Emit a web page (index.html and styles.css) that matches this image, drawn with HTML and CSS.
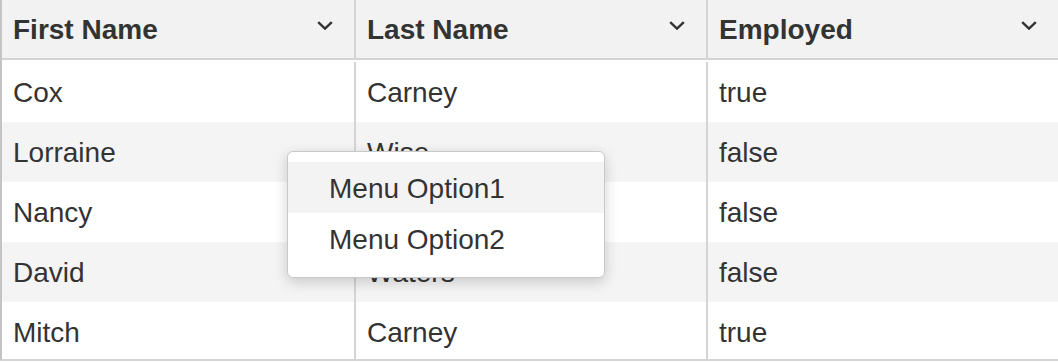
FILE: index.html
```html
<!DOCTYPE html>
<html>
<head>
<meta charset="utf-8">
<link rel="stylesheet" href="styles.css">
</head>
<body>
<div class="grid">
  <div class="head">
    <div class="hcell"><span>First Name</span><svg class="chev" viewBox="0 0 16 9"><path d="M1.2 1.2 L8 7.6 L14.8 1.2" /></svg></div>
    <div class="hcell"><span>Last Name</span><svg class="chev" viewBox="0 0 16 9"><path d="M1.2 1.2 L8 7.6 L14.8 1.2" /></svg></div>
    <div class="hcell last"><span>Employed</span><svg class="chev" viewBox="0 0 16 9"><path d="M1.2 1.2 L8 7.6 L14.8 1.2" /></svg></div>
  </div>
  <div class="body">
    <div class="row"><div class="cell">Cox</div><div class="cell">Carney</div><div class="cell last">true</div></div>
    <div class="row alt"><div class="cell">Lorraine</div><div class="cell">Wise</div><div class="cell last">false</div></div>
    <div class="row"><div class="cell">Nancy</div><div class="cell">Waters</div><div class="cell last">false</div></div>
    <div class="row alt"><div class="cell">David</div><div class="cell">Waters</div><div class="cell last">false</div></div>
    <div class="row"><div class="cell">Mitch</div><div class="cell">Carney</div><div class="cell last">true</div></div>
  </div>
</div>
<div class="menu">
  <div class="item active">Menu Option1</div>
  <div class="item">Menu Option2</div>
</div>
</body>
</html>
```

FILE: styles.css
```css
html, body {
  margin: 0;
  padding: 0;
  background: #ffffff;
}
body {
  font-family: "Liberation Sans", Arial, sans-serif;
  color: #333333;
  font-size: 28px;
  width: 1058px;
  height: 362px;
  overflow: hidden;
  position: relative;
}
.grid {
  box-sizing: border-box;
  height: 361px;
  border-left: 2px solid #c4c4c4;
  border-bottom: 2px solid #d4d4d4;
  overflow: hidden;
}
.head {
  display: grid;
  grid-template-columns: 354px 352px 1fr;
  height: 58px;
  background: #f2f2f2;
  border-bottom: 2px solid #d4d4d4;
}
.hcell {
  display: flex;
  align-items: center;
  justify-content: space-between;
  padding: 1px 21px 0 11px;
  border-right: 2px solid #d4d4d4;
  font-weight: bold;
}
.hcell.last {
  border-right: none;
  padding-right: 21px;
}
.chev {
  width: 16px;
  height: 9px;
  margin-top: -9px;
}
.chev path {
  fill: none;
  stroke: #333333;
  stroke-width: 2.4;
}
.body {
  padding-top: 2px;
}
.row {
  display: grid;
  grid-template-columns: 354px 352px 1fr;
  height: 60px;
}
.row.alt {
  background: #f4f4f4;
}
.cell {
  display: flex;
  align-items: center;
  padding: 2px 0 0 11px;
  border-right: 2px solid #d4d4d4;
}
.cell.last {
  border-right: none;
}
.menu {
  position: absolute;
  left: 287px;
  top: 151px;
  width: 318px;
  height: 127px;
  box-sizing: border-box;
  background: #ffffff;
  border: 1px solid #c9c9c9;
  border-radius: 6px;
  box-shadow: 0 4px 14px rgba(0, 0, 0, 0.18);
  padding: 10px 0 12px;
}
.item {
  height: 51px;
  line-height: 53px;
  padding-left: 41px;
  color: #333333;
}
.item.active {
  background: #f3f3f3;
}
```
